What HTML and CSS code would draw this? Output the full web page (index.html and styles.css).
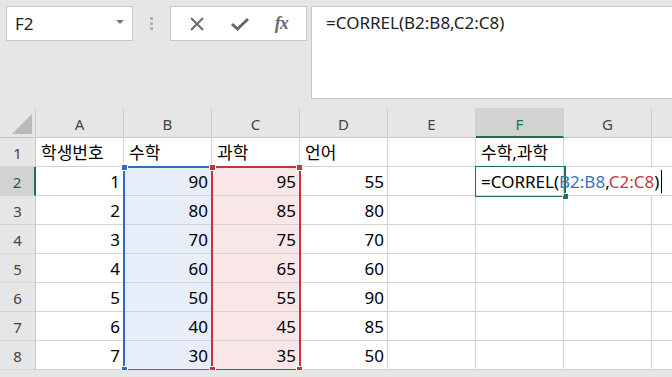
FILE: index.html
```html
<!DOCTYPE html>
<html lang="ko">
<head>
    <meta charset="UTF-8">
    <title>CORREL</title>
<link rel="stylesheet" href="styles.css">
</head>
<body>

<div class="formula-bar">
    <div class="name-box">F2<span class="caret"></span></div>
    <div class="grip"><i></i><i></i><i></i></div>
    <div class="buttons">
        <svg width="16" height="16" viewBox="0 0 16 16"><path d="M2 2 L14 14 M14 2 L2 14" stroke="#6a6a6a" stroke-width="2" fill="none"/></svg>
        <svg width="20" height="16" viewBox="0 0 20 16"><path d="M2 8 L7.5 13 L18 3" stroke="#6a6a6a" stroke-width="3" fill="none"/></svg>
        <span class="fx">fx</span>
    </div>
    <div class="formula">=CORREL(B2:B8,C2:C8)</div>
</div>

<div class="sheet">
    <!-- 머리글 -->
    <div class="corner"><span class="tri"></span></div>
    <div class="col-head">A</div>
    <div class="col-head">B</div>
    <div class="col-head">C</div>
    <div class="col-head">D</div>
    <div class="col-head">E</div>
    <div class="col-head active">F</div>
    <div class="col-head">G</div>
    <div class="col-head"></div>

    <div class="row-head">1</div>
    <div class="cell">학생번호</div>
    <div class="cell">수학</div>
    <div class="cell">과학</div>
    <div class="cell">언어</div>
    <div class="cell"></div>
    <div class="cell">수학,과학</div>
    <div class="cell"></div>
    <div class="cell"></div>

    <div class="row-head active">2</div>
    <div class="cell num">1</div>
    <div class="cell num blue">90</div>
    <div class="cell num red">95</div>
    <div class="cell num">55</div>
    <div class="cell"></div>
    <div class="cell editing">=CORREL(<span class="ref-b">B2:B8</span>,<span class="ref-c">C2:C8</span>)<span class="cursor"></span></div>
    <div class="cell no-line"></div>
    <div class="cell"></div>

    <div class="row-head">3</div>
    <div class="cell num">2</div>
    <div class="cell num blue">80</div>
    <div class="cell num red">85</div>
    <div class="cell num">80</div>
    <div class="cell"></div>
    <div class="cell"></div>
    <div class="cell"></div>
    <div class="cell"></div>

    <div class="row-head">4</div>
    <div class="cell num">3</div>
    <div class="cell num blue">70</div>
    <div class="cell num red">75</div>
    <div class="cell num">70</div>
    <div class="cell"></div>
    <div class="cell"></div>
    <div class="cell"></div>
    <div class="cell"></div>

    <div class="row-head">5</div>
    <div class="cell num">4</div>
    <div class="cell num blue">60</div>
    <div class="cell num red">65</div>
    <div class="cell num">60</div>
    <div class="cell"></div>
    <div class="cell"></div>
    <div class="cell"></div>
    <div class="cell"></div>

    <div class="row-head">6</div>
    <div class="cell num">5</div>
    <div class="cell num blue">50</div>
    <div class="cell num red">55</div>
    <div class="cell num">90</div>
    <div class="cell"></div>
    <div class="cell"></div>
    <div class="cell"></div>
    <div class="cell"></div>

    <div class="row-head">7</div>
    <div class="cell num">6</div>
    <div class="cell num blue">40</div>
    <div class="cell num red">45</div>
    <div class="cell num">85</div>
    <div class="cell"></div>
    <div class="cell"></div>
    <div class="cell"></div>
    <div class="cell"></div>

    <div class="row-head">8</div>
    <div class="cell num">7</div>
    <div class="cell num blue">30</div>
    <div class="cell num red">35</div>
    <div class="cell num">50</div>
    <div class="cell"></div>
    <div class="cell"></div>
    <div class="cell"></div>
    <div class="cell"></div>

    <!-- 참조 범위 테두리 -->
    <div class="range range-b">
        <span class="knob tl"></span><span class="knob bl"></span>
    </div>
    <div class="range range-c">
        <span class="knob tl"></span><span class="knob tr"></span>
        <span class="knob bl"></span><span class="knob br"></span>
    </div>
    <div class="active-cell"><span class="fill-handle"></span></div>
</div>

</body>
</html>
```

FILE: styles.css
```css
body {
    margin: 0;
    background-color: #e6e6e6;
    font-family: "Noto Sans", "Noto Sans CJK KR", sans-serif;
    color: #000;
    overflow: hidden;
}

/* 수식 입력줄 */
.formula-bar {
    display: flex;
    align-items: flex-start;
    padding: 6px 0 0 6px;
    height: 93px;
    box-sizing: border-box;
}

.name-box {
    width: 127px;
    height: 35px;
    box-sizing: border-box;
    background-color: white;
    border: 1px solid #c6c6c6;
    display: flex;
    align-items: center;
    justify-content: space-between;
    padding: 0 8px 0 8px;
    font-size: 17px;
    color: #222;
}

.caret {
    width: 0;
    height: 0;
    border-left: 4px solid transparent;
    border-right: 4px solid transparent;
    border-top: 4px solid #777;
    margin-bottom: 4px;
}

.grip {
    width: 37px;
    height: 35px;
    display: flex;
    flex-direction: column;
    align-items: center;
    justify-content: center;
    gap: 2px;
}

.grip i {
    display: block;
    width: 3px;
    height: 3px;
    background-color: #b3b3b3;
}

.buttons {
    width: 137px;
    height: 35px;
    box-sizing: border-box;
    background-color: white;
    border: 1px solid #c6c6c6;
    display: flex;
    align-items: center;
    justify-content: space-around;
    padding: 0 6px;
}

.fx {
    font-family: "Liberation Serif", serif;
    font-style: italic;
    font-weight: bold;
    font-size: 18px;
    color: #6a6a6a;
    letter-spacing: -1px;
}

.formula {
    flex: 1;
    height: 93px;
    box-sizing: border-box;
    margin-left: 4px;
    margin-right: -2px;
    background-color: white;
    border: 1px solid #c6c6c6;
    padding: 4px 0 0 14px;
    font-size: 17px;
    color: #222;
}

/* 시트 */
.sheet {
    position: relative;
    margin-top: 15px;
    display: grid;
    grid-template-columns: 36px repeat(7, 88px) 30px;
    grid-template-rows: 30px repeat(8, 29px);
}

.corner,
.col-head,
.row-head {
    background-color: #e6e6e6;
    color: #444;
    font-size: 15px;
    display: flex;
    align-items: center;
    justify-content: center;
    box-sizing: border-box;
}

.corner {
    border-right: 1px solid #cfcfcf;
    border-bottom: 1px solid #c6c6c6;
    position: relative;
}

.tri {
    position: absolute;
    right: 3px;
    bottom: 3px;
    width: 0;
    height: 0;
    border-left: 20px solid transparent;
    border-bottom: 20px solid #b9b9b9;
}

.col-head {
    border-right: 1px solid #cfcfcf;
    border-bottom: 1px solid #c6c6c6;
    padding-top: 3px;
}

.col-head.active {
    background-color: #d2d2d2;
    color: #217346;
    border-bottom: 2px solid #217346;
}

.row-head {
    border-right: 1px solid #c6c6c6;
    border-bottom: 1px solid #d4d4d4;
    padding-top: 2px;
}

.row-head.active {
    background-color: #d2d2d2;
    color: #1e5e3a;
    border-right: 2px solid #217346;
}

.cell {
    background-color: white;
    border-right: 1px solid #d4d4d4;
    border-bottom: 1px solid #d4d4d4;
    box-sizing: border-box;
    font-size: 17px;
    line-height: 28px;
    padding: 1px 4px 0 5px;
    white-space: nowrap;
}

.cell.num {
    text-align: right;
    padding-right: 3px;
}

.cell.blue {
    background-color: #e7eef9;
}

.cell.red {
    background-color: #f9e7e8;
}

.cell.no-line {
    border-right-color: white;
}

.cell.editing {
    overflow: visible;
    position: relative;
    z-index: 2;
    padding-left: 5px;
}

.ref-b {
    color: #3a6fc4;
}

.ref-c {
    color: #c8374a;
}

.cursor {
    display: inline-block;
    width: 1px;
    height: 23px;
    background-color: #000;
    vertical-align: -5px;
    margin-left: 2px;
}

/* 범위 표시 */
.range {
    position: absolute;
    top: 58px;
    height: 205px;
    width: 90px;
    box-sizing: border-box;
    border: 2px solid;
    z-index: 3;
}

.range-b {
    left: 123px;
    border-color: #2f6bc7;
}

.range-c {
    left: 211px;
    border-color: #c4343f;
}

.knob {
    position: absolute;
    width: 5px;
    height: 5px;
    border: 1px solid white;
}

.range-b .knob {
    background-color: #2f6bc7;
}

.range-c .knob {
    background-color: #c4343f;
}

.knob.tl { left: -4px; top: -4px; }
.knob.bl { left: -4px; bottom: -4px; }
.knob.tr { right: -4px; top: -4px; }
.knob.br { right: -4px; bottom: -4px; }

.active-cell {
    position: absolute;
    left: 475px;
    top: 58px;
    width: 91px;
    height: 31px;
    box-sizing: border-box;
    border: 2px solid #217346;
    z-index: 1;
}

.fill-handle {
    position: absolute;
    right: -5px;
    bottom: -5px;
    width: 5px;
    height: 5px;
    background-color: #217346;
    border: 1px solid white;
}
```
